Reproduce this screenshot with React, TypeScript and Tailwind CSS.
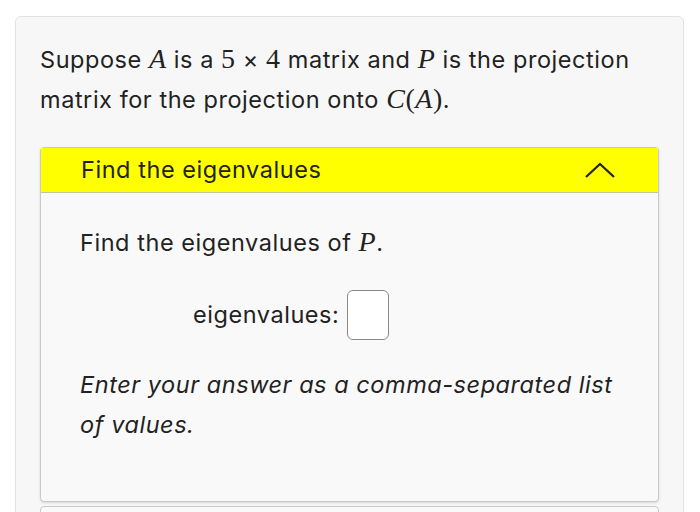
import React from 'react';

const math = "font-['Liberation_Serif','DejaVu_Serif',serif] italic text-[28px] leading-none";
const mathUp = "font-['Liberation_Serif','DejaVu_Serif',serif] text-[28px] leading-none";
const body = "text-[23.5px] tracking-[0.55px]";

export default function App() {
  return (
    <div className="w-[700px] h-[512px] bg-white overflow-hidden font-['Inter','Liberation_Sans',sans-serif] text-[#222]">
      <div className="ml-[15px] mr-[16px] mt-[16px] h-[520px] bg-[#f7f7f7] border border-[#e2e2e2] rounded-[6px] px-[24px] pt-[23px]">
        <p className={`${body} leading-[40px]`}>
          Suppose <span className={math}>A</span> is a <span className={mathUp}>5</span> × <span className={mathUp}>4</span> matrix and <span className={math}>P</span> is the projection matrix for the projection onto <span className={math}>C</span><span className={mathUp}>(</span><span className={math}>A</span><span className={mathUp}>)</span>.
        </p>

        <div className="mt-[27px] border border-[#c9c9c9] rounded-[4px] bg-[#f9f9f9] shadow-sm">
          <div className="h-[45px] bg-[#ffff00] border-b border-[#c4c4a0] flex items-center justify-between pl-[40px] pr-[42px]">
            <span className={body}>Find the eigenvalues</span>
            <svg width="32" height="18" viewBox="0 0 32 18" fill="none" stroke="#222" strokeWidth="2.2">
              <path d="M2 16 L16 3 L30 16" />
            </svg>
          </div>
          <div className="h-[308px] pl-[39px] pr-[24px] pt-[30px]">
            <p className={`${body} leading-[40px]`}>
              Find the eigenvalues of <span className={math}>P</span>.
            </p>
            <div className="mt-[27px] flex items-center pl-[113px]">
              <span className={body}>eigenvalues:</span>
              <div className="ml-[8px] w-[42px] h-[50px] bg-white border border-[#888] rounded-[6px]" />
            </div>
            <p className={`mt-[25px] pr-[20px] ${body} leading-[40px] italic`}>
              Enter your answer as a comma-separated list of values.
            </p>
          </div>
        </div>

        <div className="mt-[4px] h-[40px] border border-[#c9c9c9] rounded-[4px] bg-[#f9f9f9]" />
      </div>
    </div>
  );
}
